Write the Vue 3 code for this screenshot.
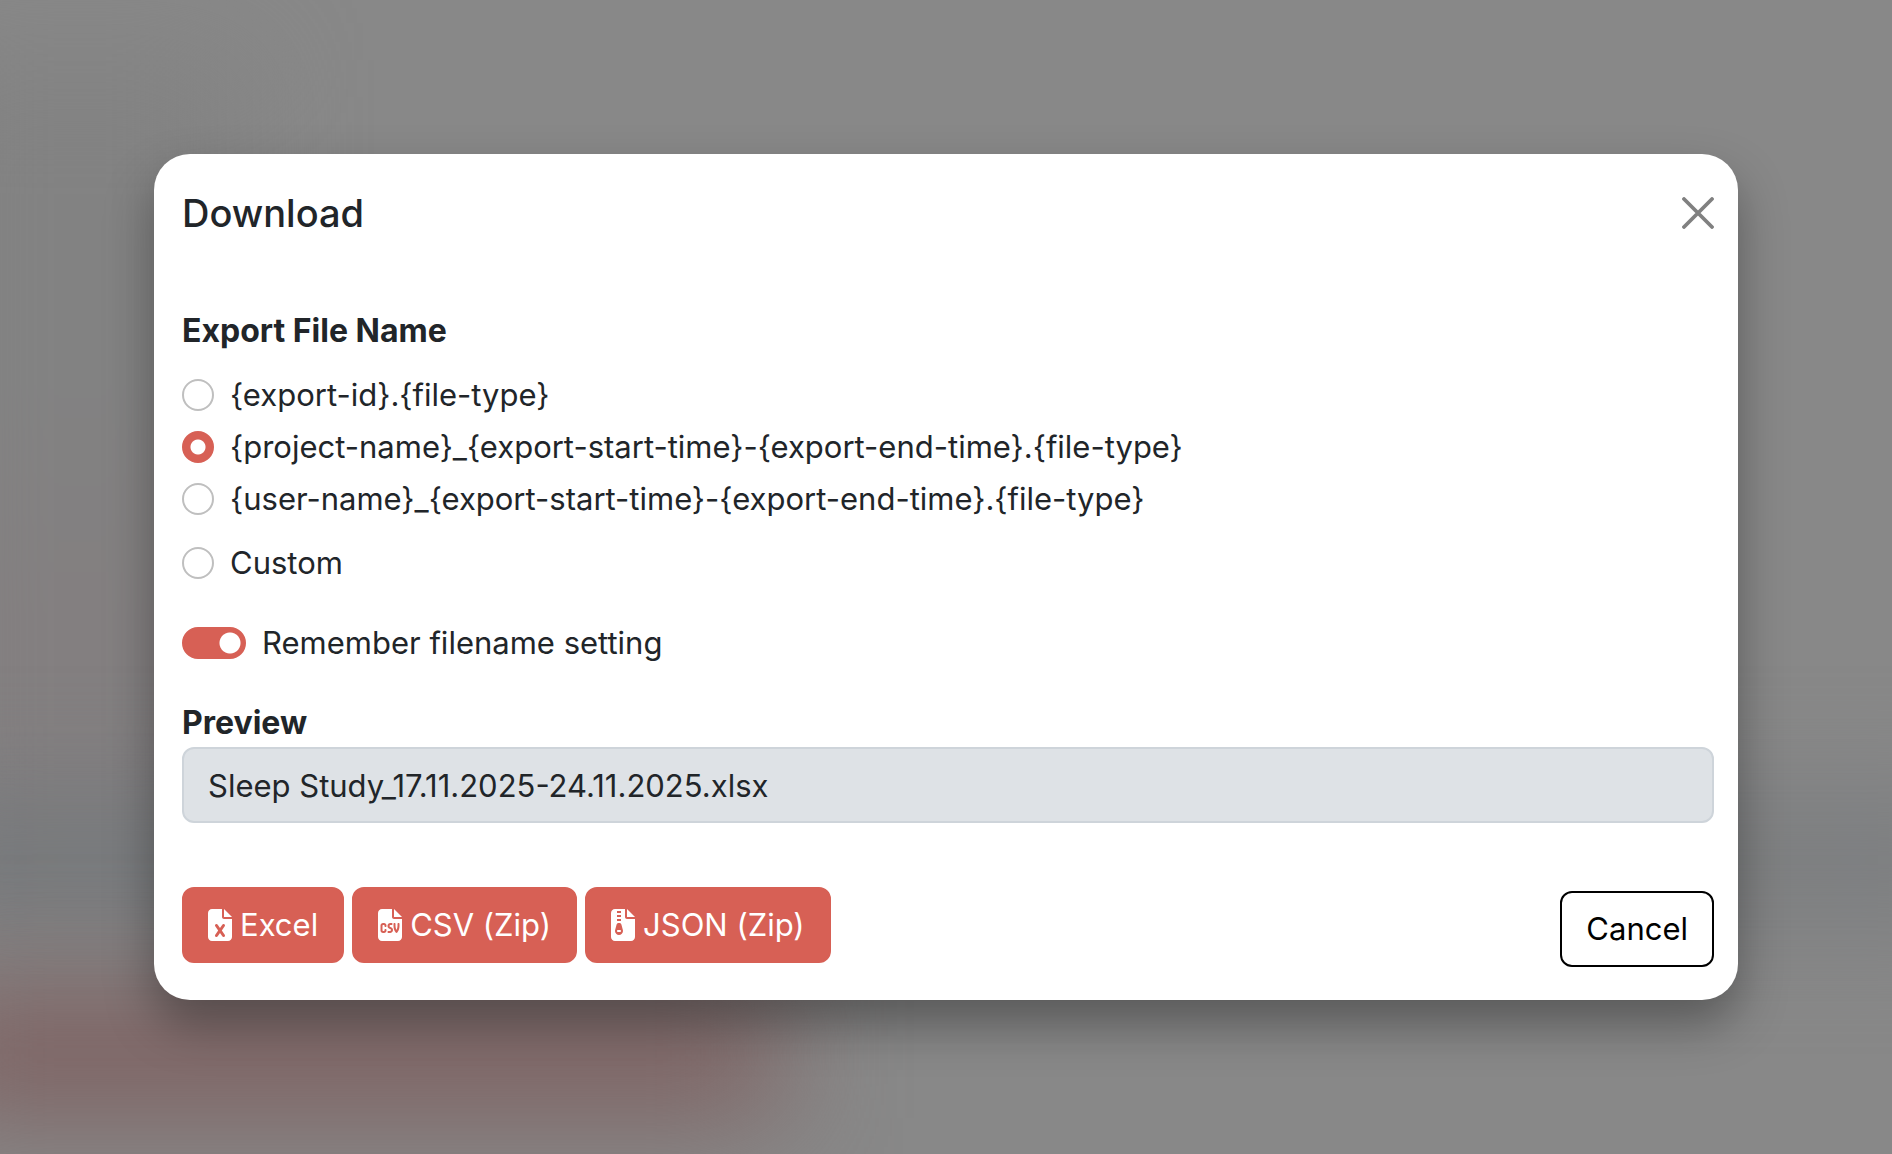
<script setup>
import { ref, computed } from 'vue'

const nameOptions = [
  { id: 'export-id', label: '{export-id}.{file-type}' },
  { id: 'project', label: '{project-name}_{export-start-time}-{export-end-time}.{file-type}' },
  { id: 'user', label: '{user-name}_{export-start-time}-{export-end-time}.{file-type}' },
  { id: 'custom', label: 'Custom' },
]

const page = 'M224 0V128C224 145.7 238.3 160 256 160H384V448C384 483.3 355.3 512 320 512H64C28.7 512 0 483.3 0 448V64C0 28.7 28.7 0 64 0H224zM256 0L384 128H256V0z'

const formats = [
  {
    label: 'Excel',
    glyph: 'M155.7 250.2L192 302.1l36.3-51.9c7.6-10.9 22.6-13.5 33.4-5.9s13.5 22.6 5.9 33.4L221.3 344l46.4 66.2c7.6 10.9 5 25.8-5.9 33.4s-25.8 5-33.4-5.9L192 385.8l-36.3 51.9c-7.6 10.9-22.6 13.5-33.4 5.9s-13.5-22.6-5.9-33.4L162.7 344l-46.4-66.2c-7.6-10.9-5-25.8 5.9-33.4s25.8-5 33.4 5.9z',
  },
  {
    label: 'CSV (Zip)',
    glyph: 'M80 224C57.91 224 40 241.9 40 264V344C40 366.1 57.91 384 80 384H96C118.1 384 136 366.1 136 344V336C136 327.2 128.8 320 120 320C111.2 320 104 327.2 104 336V344C104 348.4 100.4 352 96 352H80C75.58 352 72 348.4 72 344V264C72 259.6 75.58 256 80 256H96C100.4 256 104 259.6 104 264V272C104 280.8 111.2 288 120 288C128.8 288 136 280.8 136 272V264C136 241.9 118.1 224 96 224H80zM175.4 310.6L200.8 325.1C205.2 327.7 208 332.5 208 337.6C208 345.6 201.6 352 193.6 352H168C159.2 352 152 359.2 152 368C152 376.8 159.2 384 168 384H193.6C219.2 384 240 363.2 240 337.6C240 320.1 231.1 305.6 216.6 297.4L191.2 282.9C186.8 280.3 184 275.5 184 270.4C184 262.4 190.4 256 198.4 256H216C224.8 256 232 248.8 232 240C232 231.2 224.8 224 216 224H198.4C172.8 224 152 244.8 152 270.4C152 287 160.9 302.4 175.4 310.6zM280 240C280 231.2 272.8 224 264 224C255.2 224 248 231.2 248 240V271.6C248 306.3 258.3 340.3 277.6 369.2L282.7 376.9C285.7 381.3 290.6 384 296 384C301.4 384 306.3 381.3 309.3 376.9L314.4 369.2C333.7 340.3 344 306.3 344 271.6V240C344 231.2 336.8 224 328 224C319.2 224 312 231.2 312 240V271.6C312 294.6 306.5 317.2 296 337.5C285.5 317.2 280 294.6 280 271.6V240z',
  },
  {
    label: 'JSON (Zip)',
    glyph: 'M96 32h64v32H96zM96 96h64v32H96zM96 160h64v32H96zM89.7 247.8c3.7-14 16.4-23.8 30.9-23.8h14.8c14.5 0 27.2 9.7 30.9 23.8l23.5 88.2c1.4 5.4 2.1 10.9 2.1 16.4c0 35.2-28.8 63.7-64 63.7s-64-28.5-64-63.7c0-5.5 .7-11.1 2.1-16.4l23.5-88.2zM112 336c-8.8 0-16 7.2-16 16s7.2 16 16 16h32c8.8 0 16-7.2 16-16s-7.2-16-16-16H112z',
  },
]

const selected = ref('project')
const remember = ref(true)
const preview = computed(() => 'Sleep Study_17.11.2025-24.11.2025.xlsx')
</script>

<template>
  <div class="screen">
    <div class="backdrop" aria-hidden="true">
      <div class="glow side"></div>
      <div class="glow band"></div>
      <div class="glow red"></div>
    </div>

    <section class="modal" role="dialog" aria-modal="true" aria-labelledby="dialog-title">
      <header class="head">
        <h1 id="dialog-title">Download</h1>
        <button class="close" type="button" aria-label="Close">
          <svg viewBox="0 0 16 16" width="32" height="32">
            <path d="M1 1l14 14M15 1L1 15" fill="none" stroke="currentColor" stroke-width="1.9" stroke-linecap="round" />
          </svg>
        </button>
      </header>

      <fieldset class="names">
        <legend>Export File Name</legend>
        <label v-for="o in nameOptions" :key="o.id" class="choice" :class="{ custom: o.id === 'custom' }">
          <input v-model="selected" type="radio" name="filename" :value="o.id" />
          <span>{{ o.label }}</span>
        </label>
      </fieldset>

      <label class="choice remember">
        <input v-model="remember" class="switch" type="checkbox" role="switch" />
        <span>Remember filename setting</span>
      </label>

      <div class="field">
        <label for="preview">Preview</label>
        <input id="preview" class="preview" type="text" :value="preview" readonly />
      </div>

      <footer class="foot">
        <div class="formats">
          <button v-for="f in formats" :key="f.label" class="btn primary" type="button">
            <svg viewBox="0 0 384 512" width="24" height="32" aria-hidden="true">
              <path :d="page + f.glyph" fill="currentColor" fill-rule="evenodd" />
            </svg>
            <span>{{ f.label }}</span>
          </button>
        </div>
        <button class="btn outline" type="button">Cancel</button>
      </footer>
    </section>
  </div>
</template>

<style>
body {
  background: #888;
}
</style>

<style scoped>
.screen {
  position: relative;
  box-sizing: border-box;
  min-height: 100vh;
  padding: 154px;
  overflow: hidden;
  font-family: Inter, "Liberation Sans", sans-serif;
  font-size: 31px;
  line-height: 48px;
  color: #212529;
}

.backdrop {
  position: absolute;
  inset: 0;
  background: #888;
}

.glow {
  position: absolute;
  filter: blur(56px);
}

.side {
  left: -80px;
  width: 320px;
  top: 60px;
  height: 800px;
  background: linear-gradient(#828282 40%, #837f80 70%);
}

.band {
  left: -120px;
  right: -120px;
  top: 800px;
  height: 120px;
  background: linear-gradient(90deg, #74777a, #7c7e80);
}

.red {
  left: -80px;
  width: 860px;
  top: 988px;
  height: 130px;
  background: #7e6262;
}

.modal {
  position: relative;
  box-sizing: border-box;
  padding: 32px 24px 33px 28px;
  border-radius: 36px;
  background: #fff;
  box-shadow: 0 24px 48px rgba(0, 0, 0, 0.34);
}

.head {
  display: flex;
  align-items: center;
  justify-content: space-between;
  margin-bottom: 67px;
}

h1 {
  margin: 0;
  font-size: 38px;
  font-weight: 500;
  line-height: 54px;
}

button,
input {
  font: inherit;
}

.close {
  display: flex;
  padding: 0;
  border: 0;
  background: none;
  color: #808080;
}

.names {
  margin: 0;
  padding: 0;
  border: 0;
}

legend,
.field label {
  display: block;
  padding: 0;
  font-size: 32px;
  font-weight: 700;
}

legend {
  margin-bottom: 16px;
}

.choice {
  display: flex;
  align-items: center;
  gap: 16px;
  margin-bottom: 4px;
}

.custom {
  margin-top: 16px;
}

.choice input {
  appearance: none;
  box-sizing: border-box;
  flex: none;
  width: 32px;
  height: 32px;
  margin: 0;
  border: 2px solid #bfbfbf;
  border-radius: 16px;
  background: #fff;
}

.choice input:checked {
  border-color: #d76055;
  background: radial-gradient(circle, #fff 7px, #d76055 8px);
}

.choice .switch {
  width: 64px;
}

.choice .switch:checked {
  background: radial-gradient(circle at 46px 14px, #fff 10px, #d76055 11px);
}

.remember {
  margin: 28px 0 32px;
}

.preview {
  display: block;
  box-sizing: border-box;
  width: 100%;
  height: 76px;
  padding: 12px 24px;
  border: 2px solid #ced4da;
  border-radius: 12px;
  background: #dee2e6;
  color: inherit;
  outline: 0;
}

.foot {
  display: flex;
  align-items: flex-end;
  justify-content: space-between;
  margin-top: 64px;
}

.formats {
  display: flex;
  gap: 8px;
  margin-bottom: 4px;
}

.btn {
  display: flex;
  align-items: center;
  gap: 8px;
  height: 76px;
  padding: 12px 24px;
  border: 2px solid #d76055;
  border-radius: 12px;
  background: #d76055;
  color: #fff;
}

.outline {
  border-color: #000;
  background: #fff;
  color: #000;
}
</style>
